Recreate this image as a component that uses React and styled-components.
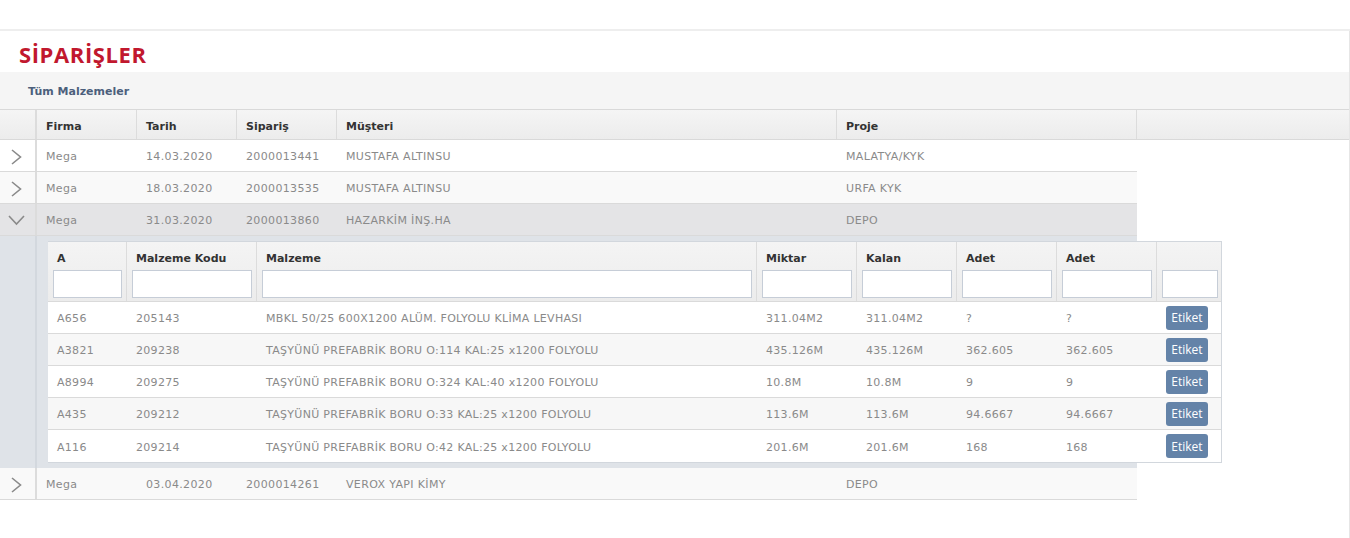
import styled, { createGlobalStyle } from "styled-components"

const GlobalStyle = createGlobalStyle`
	html, body {
		margin: 0;
		padding: 0;
		background: #fff;
	}
	body {
		font-family: "DejaVu Sans", Verdana, sans-serif;
		font-size: 11px;
		color: #8a8a8a;
	}
	* {
		box-sizing: border-box;
	}
`

const TopBar = styled.div`
	height: 31px;
	border-bottom: 2px solid #eeeeee;
`

const Page = styled.div`
	border-right: 1px solid #e6e6e6;
	min-height: 507px;
`

const Title = styled.h1`
	margin: 0;
	height: 41px;
	padding: 11px 0 0 19px;
	font-family: "Open Sans", sans-serif;
	font-weight: 700;
	font-size: 22px;
	line-height: 24px;
	letter-spacing: 0.6px;
	color: #c1182e;
`

const TabBar = styled.div`
	height: 37px;
	background: #f5f5f5;
	display: flex;
	align-items: center;
	padding: 2px 0 0 28px;
`

const Tab = styled.span`
	font-weight: 700;
	font-size: 11px;
	color: #4c5f7c;
`

const mainCols = "37px 100px 100px 100px 500px 300px"

const HeaderRow = styled.div`
	display: grid;
	grid-template-columns: ${mainCols} 1fr;
	height: 31px;
	border-top: 1px solid #d9d9d9;
	border-bottom: 1px solid #d9d9d9;
	background: linear-gradient(#f5f5f5, #ececec);
`

const HeadCell = styled.div`
	display: flex;
	align-items: center;
	padding: 3px 0 0 9px;
	border-right: 1px solid #dcdcdc;
	font-weight: 700;
	color: #333;
	&:first-child {
		border-right: 2px solid #dcdcdc;
	}
	&:last-child {
		border-right: none;
	}
`

const Row = styled.div`
	display: grid;
	grid-template-columns: ${mainCols};
	width: 1137px;
	height: 32px;
	border-bottom: 1px solid #dadada;
	background: ${p => p.$bg};
`

const ExpandCell = styled.div`
	display: flex;
	align-items: center;
	justify-content: center;
	padding: 2px 3px 0 0;
	border-right: 2px solid #dcdcdc;
`

const Cell = styled.div`
	display: flex;
	align-items: center;
	padding: 2px 0 0 9px;
	white-space: nowrap;
	overflow: hidden;
	letter-spacing: 0.35px;
`

const DetailRow = styled.div`
	display: grid;
	grid-template-columns: 37px 1100px;
	background: #dfe3e8;
	width: 1137px;
	height: 232px;
`

const DetailGutter = styled.div`
	border-right: 2px solid #d3d8de;
	background: #dfe3e8;
`

const DetailBody = styled.div`
	padding: 5px 0 0 11px;
	overflow: visible;
`

const subCols = "79px 130px 500px 100px 100px 100px 100px 65px"

const SubTable = styled.div`
	width: 1174px;
	border: 1px solid #d2d7dd;
	background: #fff;
`

const SubHead = styled.div`
	display: grid;
	grid-template-columns: ${subCols};
	background: linear-gradient(#f4f4f4, #ececec);
	border-bottom: 1px solid #dadada;
	margin-left: -1px;
`

const SubHeadCell = styled.div`
	padding: 8px 4px 3px 5px;
	border-right: 1px solid #dcdcdc;
	&:last-child {
		border-right: none;
	}
`

const SubLabel = styled.div`
	height: 16px;
	line-height: 18px;
	margin-bottom: 4px;
	padding-left: 4px;
	font-weight: 700;
	color: #333;
`

const FilterInput = styled.input`
	display: block;
	width: 100%;
	height: 28px;
	border: 1px solid #c6cdd7;
	background: #fff;
	padding: 0 4px;
	margin: 0;
	outline: none;
`

const SubRow = styled.div`
	display: grid;
	grid-template-columns: ${subCols};
	height: 32px;
	background: ${p => p.$bg};
	border-bottom: 1px solid #dadada;
	margin-left: -1px;
	&:last-child {
		border-bottom: none;
	}
`

const SubCell = styled.div`
	display: flex;
	align-items: center;
	padding: ${p => (p.$button ? "0 0 0 9px" : "2px 0 0 9px")};
	white-space: nowrap;
	overflow: hidden;
	letter-spacing: 0.3px;
	color: #8a8a8a;
`

const EtiketButton = styled.button`
	width: 42px;
	height: 24px;
	padding: 0;
	border: none;
	border-radius: 3px;
	background: #6483a8;
	color: #fff;
	font-family: "Open Sans", sans-serif;
	font-size: 12px;
	cursor: pointer;
`

const Chevron = ({ open }) =>
	open ? (
		<svg width="17" height="11" viewBox="0 0 17 11">
			<polyline points="1,1 8.5,9 16,1" fill="none" stroke="#8a8a8a" strokeWidth="1.6" />
		</svg>
	) : (
		<svg width="11" height="16" viewBox="0 0 11 16">
			<polyline points="1,1 9.5,8 1,15" fill="none" stroke="#8a8a8a" strokeWidth="1.6" />
		</svg>
	)

const orders = [
	["Mega", "14.03.2020", "2000013441", "MUSTAFA ALTINSU", "MALATYA/KYK"],
	["Mega", "18.03.2020", "2000013535", "MUSTAFA ALTINSU", "URFA KYK"],
	["Mega", "31.03.2020", "2000013860", "HAZARKİM İNŞ.HA", "DEPO"],
	["Mega", "03.04.2020", "2000014261", "VEROX YAPI KİMY", "DEPO"],
]

const items = [
	["A656", "205143", "MBKL 50/25 600X1200 ALÜM. FOLYOLU KLİMA LEVHASI", "311.04M2", "311.04M2", "?", "?"],
	["A3821", "209238", "TAŞYÜNÜ PREFABRİK BORU O:114 KAL:25 x1200 FOLYOLU", "435.126M", "435.126M", "362.605", "362.605"],
	["A8994", "209275", "TAŞYÜNÜ PREFABRİK BORU O:324 KAL:40 x1200 FOLYOLU", "10.8M", "10.8M", "9", "9"],
	["A435", "209212", "TAŞYÜNÜ PREFABRİK BORU O:33 KAL:25 x1200 FOLYOLU", "113.6M", "113.6M", "94.6667", "94.6667"],
	["A116", "209214", "TAŞYÜNÜ PREFABRİK BORU O:42 KAL:25 x1200 FOLYOLU", "201.6M", "201.6M", "168", "168"],
]

const subHeaders = ["A", "Malzeme Kodu", "Malzeme", "Miktar", "Kalan", "Adet", "Adet", ""]
const rowBgs = ["#ffffff", "#f9f9f9", "#e4e4e6", "#f9f9f9"]

const OrderRow = ({ order, bg, open }) => (
	<Row $bg={bg}>
		<ExpandCell>
			<Chevron open={open} />
		</ExpandCell>
		{order.map((v, i) => (
			<Cell key={i}>{v}</Cell>
		))}
	</Row>
)

const Details = () => (
	<DetailRow>
		<DetailGutter />
		<DetailBody>
			<SubTable>
				<SubHead>
					{subHeaders.map((h, i) => (
						<SubHeadCell key={i}>
							<SubLabel>{h}</SubLabel>
							<FilterInput type="text" />
						</SubHeadCell>
					))}
				</SubHead>
				{items.map((it, r) => (
					<SubRow key={r} $bg={r % 2 ? "#f7f7f7" : "#ffffff"}>
						{it.map((v, i) => (
							<SubCell key={i}>{v}</SubCell>
						))}
						<SubCell $button>
							<EtiketButton>Etiket</EtiketButton>
						</SubCell>
					</SubRow>
				))}
			</SubTable>
		</DetailBody>
	</DetailRow>
)

const App = () => (
	<>
		<GlobalStyle />
		<TopBar />
		<Page>
			<Title>SİPARİŞLER</Title>
			<TabBar>
				<Tab>Tüm Malzemeler</Tab>
			</TabBar>
			<HeaderRow>
				<HeadCell />
				<HeadCell>Firma</HeadCell>
				<HeadCell>Tarih</HeadCell>
				<HeadCell>Sipariş</HeadCell>
				<HeadCell>Müşteri</HeadCell>
				<HeadCell>Proje</HeadCell>
				<HeadCell />
			</HeaderRow>
			{orders.slice(0, 3).map((o, i) => (
				<OrderRow key={i} order={o} bg={rowBgs[i]} open={i === 2} />
			))}
			<Details />
			<OrderRow order={orders[3]} bg={rowBgs[3]} />
		</Page>
	</>
)

export default App
